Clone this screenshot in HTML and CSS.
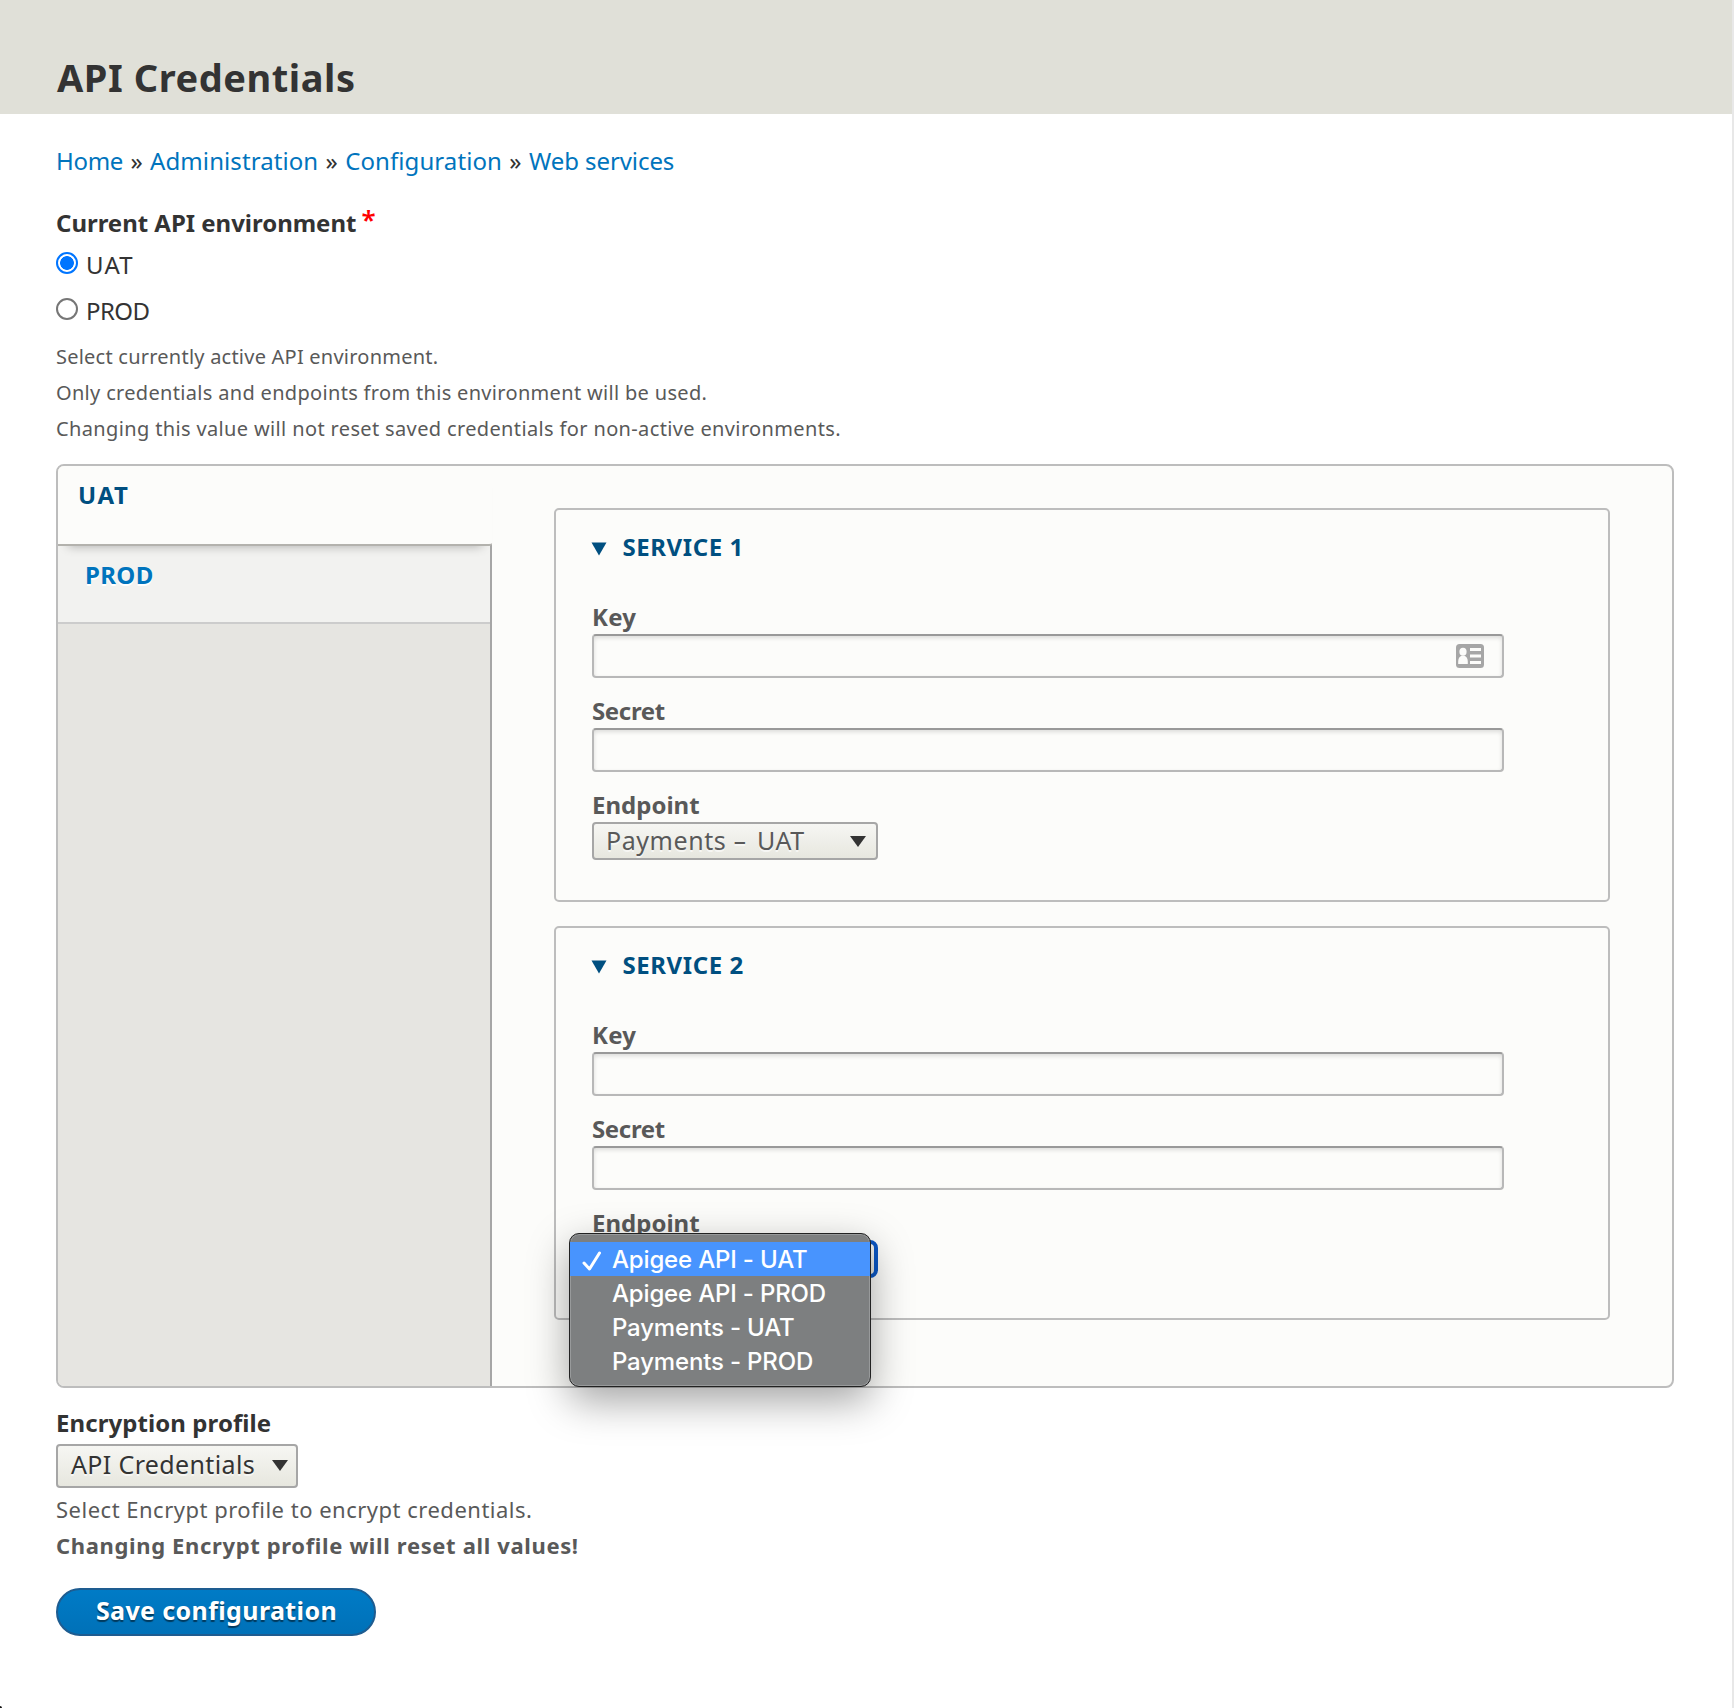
FILE: index.html
```html
<!DOCTYPE html>
<html lang="en">
<head>
<meta charset="utf-8">
<title>API Credentials</title>
<link rel="stylesheet" href="styles.css">
</head>
<body>
<header class="page-header"><h1>API Credentials</h1></header>
<main class="page">
  <nav class="breadcrumb"><a href="#" class="crumb-home">Home</a><span>»</span><a href="#">Administration</a><span>»</span><a href="#">Configuration</a><span>»</span><a href="#" class="crumb-web">Web services</a></nav>
  <form>
    <div class="group-label">Current API environment<span class="required">*</span></div>
    <label class="radio uat"><input type="radio" name="env" checked>UAT</label>
    <label class="radio prod"><input type="radio" name="env">PROD</label>
    <div class="description">
      <p class="hint-short">Select currently active API environment.</p>
      <p>Only credentials and endpoints from this environment will be used.</p>
      <p class="hint-long">Changing this value will not reset saved credentials for non-active environments.</p>
    </div>
    <div class="tabs">
      <div class="tab-menu">
        <a class="tab active" href="#">UAT</a>
        <a class="tab" href="#">PROD</a>
      </div>
      <div class="panes">
        <section class="details">
          <h2><svg class="tri" viewBox="0 0 16 14"><path d="M.5.5h15L8 13.5z"/></svg>SERVICE 1</h2>
          <div class="field"><span class="label key">Key</span><div class="input-wrap"><input class="text" type="text">
            <svg class="card" viewBox="0 0 28 24"><rect width="28" height="24" rx="3.5" fill="#a6a6a6"/><g fill="#fcfcfa"><ellipse cx="7" cy="7.8" rx="3.6" ry="4"/><path d="M2.2 20v-2.5q0-4.500 3.600-5.800h2.400q3.600 1.300 3.600 5.800V20zM14 4h11v3H14zM14 10.500h11v3H14zM14 17h11v3H14z"/></g></svg></div></div>
          <div class="field"><span class="label secret">Secret</span><input class="text" type="text"></div>
          <div class="field"><span class="label">Endpoint</span><div class="select inner"><span>Payments <span class="dash">-</span> UAT</span><svg class="arrow" viewBox="0 0 16 11"><path d="M0 0h16L8 11z"/></svg></div></div>
        </section>
        <section class="details">
          <h2><svg class="tri" viewBox="0 0 16 14"><path d="M.5.5h15L8 13.5z"/></svg>SERVICE 2</h2>
          <div class="field"><span class="label key">Key</span><input class="text" type="text"></div>
          <div class="field"><span class="label secret">Secret</span><input class="text" type="text"></div>
          <div class="field"><span class="label">Endpoint</span><div class="select inner focused">
            <ul class="menu">
              <li class="selected"><svg class="check" viewBox="0 0 20 20"><path d="M2 12l5.500 6L17.500 2"/></svg>Apigee API - UAT</li>
              <li>Apigee API - PROD</li>
              <li>Payments - UAT</li>
              <li>Payments - PROD</li>
            </ul></div></div>
        </section>
      </div>
    </div>
    <div class="group-label profile">Encryption profile</div>
    <div class="select outer"><span>API Credentials</span><svg class="arrow" viewBox="0 0 16 11"><path d="M0 0h16L8 11z"/></svg></div>
    <div class="description help">
      <p>Select Encrypt profile to encrypt credentials.</p>
      <p><strong>Changing Encrypt profile will reset all values!</strong></p>
    </div>
    <button class="save" type="button">Save configuration</button>
  </form>
</main>
</body>
</html>
```
FILE: styles.css
```css
* { box-sizing: border-box; }
body {
  position: relative;
  margin: 0;
  min-height: 1708px;
  background: #fff;
  color: #333;
  border-right: 2px solid #e8e8e8;
  font: 24px/36px "Noto Sans", "Open Sans", sans-serif;
}
body::after {
  content: "";
  position: absolute;
  left: 0;
  bottom: 0;
  width: 2px;
  height: 2px;
  border-top-right-radius: 2px;
  background: #111;
}
h1, h2, p, ul { margin: 0; padding: 0; }
a { color: #0074bd; text-decoration: none; }
.page-header { height: 114px; padding: 52px 56px 0 57px; background: #e0e0d8; }
h1 { font-size: 38px; line-height: 50px; font-weight: 700; letter-spacing: .55px; }
.page { padding: 29px 58px 0 56px; }
.breadcrumb { display: flex; margin-bottom: 26px; letter-spacing: .08px; }
.breadcrumb span { width: 27px; text-align: center; }
.crumb-home { letter-spacing: -.3px; }
.crumb-web { letter-spacing: -.08px; }
.group-label { display: flex; font-weight: 700; letter-spacing: -.03px; margin-bottom: 6px; }
.required { position: relative; top: -4px; color: #f00; margin-left: 5px; font-weight: 600; font-size: 26px; line-height: 36px; height: 36px; }
.radio { display: flex; height: 36px; margin-bottom: 10px; }
.uat { letter-spacing: 1.1px; }
.prod { letter-spacing: -.6px; }
.radio input {
  appearance: none;
  flex: none;
  width: 22px;
  height: 22px;
  margin: 5px 8px 0 0;
  border: 2px solid #767676;
  border-radius: 50%;
}
.radio input:checked { border-color: #0075ff; background: radial-gradient(circle, #0075ff 6.5px, #fff 7.2px); }
.description { color: #595959; font-size: 20px; margin: 0 0 17px; letter-spacing: .32px; }
.hint-short { letter-spacing: .23px; }
.hint-long { letter-spacing: .36px; }
.tabs {
  display: flex;
  height: 924px;
  border: 2px solid #bdbdbd;
  border-radius: 8px;
  background: #fcfcfa;
}
.tab-menu {
  width: 434px;
  display: flex;
  flex-direction: column;
  border-radius: 6px 0 0 6px;
  background: linear-gradient(#a6a6a6, #a6a6a6) right 78px / 2px 100% no-repeat, #e6e5e1;
}
.tab {
  height: 78px;
  padding: 11px 27px;
  margin-right: 2px;
  font-weight: 700;
  letter-spacing: .35px;
  border-bottom: 2px solid #ccc;
  background: #f2f2f0;
  text-shadow: 0 2px #fff;
}
.tab.active {
  position: relative;
  height: 80px;
  padding-left: 20px;
  margin-right: 0;
  color: #004f80;
  letter-spacing: 1.6px;
  border-color: #b3b2ad;
  border-radius: 6px 0 3px 0;
  background: #fcfcfa;
  box-shadow: 0 10px 10px -10px rgba(0,0,0,.3);
}
.panes { flex: 1; padding: 42px 62px 0; }
.details {
  height: 394px;
  padding: 19px 104px 0 36px;
  margin-bottom: 24px;
  border: 2px solid #bdbdbd;
  border-radius: 5px;
}
h2 {
  display: flex;
  align-items: center;
  gap: 16px;
  margin-bottom: 35px;
  color: #004f80;
  font-size: 24px;
  line-height: 36px;
  font-weight: 700;
  letter-spacing: .57px;
}
.tri { width: 16px; height: 14px; fill: #004f80; margin: 3px 0 0 -1.5px; }
.field { display: flex; flex-direction: column; align-items: flex-start; color: #595959; margin-bottom: 16px; }
.label { font-weight: 700; line-height: 34px; letter-spacing: 0; }
.key { letter-spacing: .2px; }
.secret { letter-spacing: -.35px; }
.text {
  display: block;
  width: 912px;
  height: 44px;
  border: 2px solid #b8b8b8;
  border-top-color: #999;
  border-radius: 4px;
  background: #fcfcfa;
  box-shadow: inset 0 2px 4px rgba(0,0,0,.13);
}
.input-wrap { position: relative; }
.card { position: absolute; right: 20px; top: 10px; width: 28px; height: 24px; }
.select {
  display: flex;
  align-items: center;
  justify-content: space-between;
  border: 2px solid #a6a6a6;
  border-radius: 4px;
  background: linear-gradient(#f6f6f3, #e7e7df);
  text-shadow: 0 2px rgba(255,255,255,.6);
  font-size: 25px;
}
.inner { position: relative; width: 286px; height: 38px; padding: 0 10px 2px 12px; letter-spacing: .55px; }
.dash { display: inline-block; margin: 0 5px 0 3px; transform: scaleX(1.7); }
.outer { width: 242px; height: 44px; padding: 0 8px 4px 13px; letter-spacing: .36px; }
.arrow { width: 16px; height: 11px; margin-top: 3px; fill: #333; }
.focused { border: 4px solid #0b57c4; border-radius: 8px; }
.menu {
  position: absolute;
  left: -27px;
  top: -11px;
  width: 302px;
  height: 154px;
  padding-top: 8px;
  list-style: none;
  border: 1px solid #222;
  border-radius: 10px;
  background: #7d7f80;
  box-shadow: inset 0 0 0 1px #989a9b, 0 14px 40px rgba(0,0,0,.36);
  color: #fff;
  font: 500 24px/36px Inter, sans-serif;
  letter-spacing: -.17px;
  text-shadow: none;
}
.menu li { position: relative; height: 34px; padding-left: 42px; }
.menu .selected { background: #4894fe; }
.check { position: absolute; left: 12px; top: 9px; width: 20px; height: 20px; fill: none; stroke: #fff; stroke-width: 3; stroke-linecap: round; stroke-linejoin: round; }
.profile { margin: 17px 0 3px; letter-spacing: .08px; }
.help { margin: 3px 0 25px; font-size: 22px; letter-spacing: .5px; }
.help strong { font-weight: 700; letter-spacing: .64px; }
.save {
  display: block;
  width: 320px;
  height: 48px;
  padding: 0 0 3px 1px;
  border: 2px solid #1e5c90;
  border-radius: 24px;
  background: linear-gradient(#007bc6, #0071b8);
  color: #fff;
  font: 700 25px/39px "Noto Sans", sans-serif;
  letter-spacing: .38px;
  text-shadow: 0 2px 1px rgba(0,0,0,.5);
}
```
